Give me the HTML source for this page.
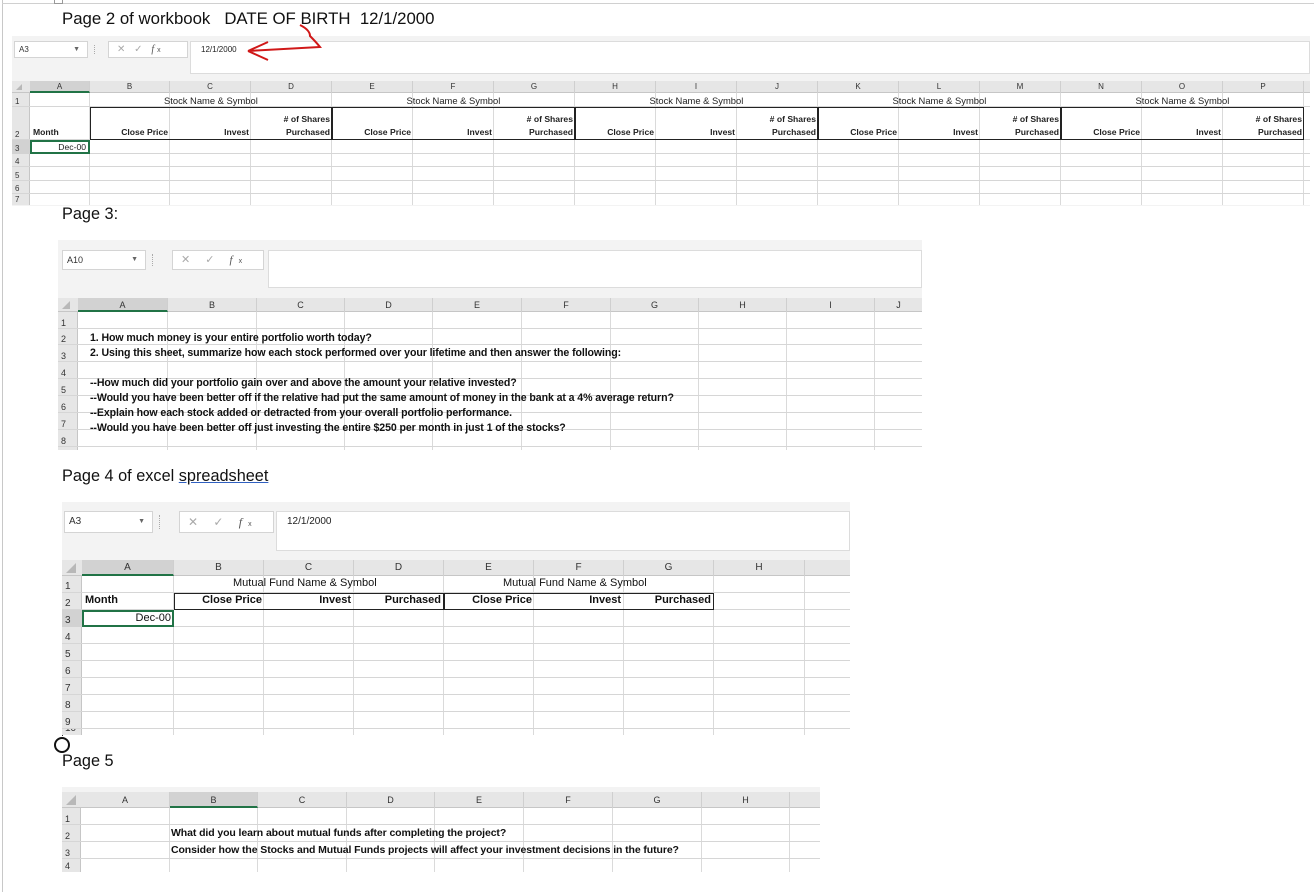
<!DOCTYPE html>
<html><head><meta charset="utf-8">
<style>
*{margin:0;padding:0;box-sizing:border-box}
body{width:1314px;height:892px;background:#fff;position:relative;overflow:hidden;font-family:"Liberation Sans",sans-serif}
.a{position:absolute}
.lbl{position:absolute;font-size:16.3px;color:#111;font-family:"Liberation Sans",sans-serif}
.c{position:absolute;white-space:nowrap;color:#111;overflow:visible}
</style></head><body>
<div class="a" style="left:2px;top:0;width:1px;height:892px;background:#c8c8c8"></div>
<div class="a" style="left:2px;top:3px;width:1312px;height:1px;background:#d0d0d0"></div>
<div class="a" style="left:54px;top:0;width:9px;height:4px;border:1px solid #999;border-top:none"></div>

<div class="lbl" style="left:62px;top:9px;font-size:16.8px">Page 2 of workbook &nbsp;&nbsp;DATE OF BIRTH &nbsp;12/1/2000</div>
<div class="lbl" style="left:62px;top:205px">Page 3:</div>
<div class="lbl" style="left:62px;top:467px">Page 4 of excel <span style="text-decoration:underline;text-decoration-color:#3060c0">spreadsheet</span></div>
<div class="lbl" style="left:62px;top:752px">Page 5</div>
<div class="a" style="left:54px;top:737px;width:16px;height:16px;border:2.5px solid #111;border-radius:50%"></div>
<div class="a" style="left:62px;top:718px;width:1px;height:18px;background:#333"></div>

<div id="root"></div>

<svg class="a" style="left:240px;top:20px;z-index:5" width="100" height="50" viewBox="0 0 100 50">
<path d="M60 5 Q70 10 70 16 Q76 22 80 27 L8 31 M8 31 L28 22 M8 31 L28 40" fill="none" stroke="#d01818" stroke-width="2"/>
</svg>

<script>
const R=document.getElementById('root');
function el(x,y,w,h,css,txt){const d=document.createElement('div');d.className='c';d.style.cssText=`left:${x}px;top:${y}px;width:${w}px;height:${h}px;`+(css||'');if(txt!=null)d.innerHTML=txt;R.appendChild(d);return d;}
function sheet(o){
 el(o.px,o.py,o.pw,o.ph,'background:#f3f3f3');
 if(o.fb){
  const f=o.fb;
  el(f.nx,f.ny,f.nw,f.nh,`background:#fff;border:1px solid #d4d4d4;font-size:${o.fs}px;line-height:${f.nh-2}px;padding-left:4px;color:#333`,f.name+`<span style="position:absolute;right:7px;font-size:7px;color:#666">&#9660;</span>`);
  el(f.nx+f.nw+6,f.ny+4,2,f.nh-8,'border-left:1px dotted #aaa');
  el(f.bx,f.ny,f.bw,f.nh,`background:#fff;border:1px solid #d4d4d4;color:#aaa;font-size:${o.fs+2}px;line-height:${f.nh-2}px;padding-left:8px;letter-spacing:${f.ls}px`,'&#10005; &#10003; <i style="font-family:Liberation Serif;color:#555">f</i><span style="font-size:7px;color:#555">x</span>');
  el(f.ix,f.ny,o.px+o.pw-f.ix,f.ih,`background:#fff;border:1px solid #dcdcdc;font-size:${o.fs}px;padding:${f.pt}px 0 0 10px;color:#222`,f.val||'');
 }
 const cols=o.cols, x0=o.x0, hy=o.hy, hh=o.hh;
 let xs=[x0];cols.forEach(w=>xs.push(xs[xs.length-1]+w));
 const right=o.px+o.pw;
 let ys=[hy+hh];o.rows.forEach(h=>ys.push(ys[ys.length-1]+h));
 const bottom=o.bottom||ys[ys.length-1];
 el(o.rhx,hy+hh,right-o.rhx,bottom-hy-hh,'background:#fff');
 el(o.rhx,hy,right-o.rhx,hh,'background:#e6e6e6;border-bottom:1px solid #c6c6c6');
 el(o.rhx,hy+hh,x0-o.rhx,bottom-hy-hh,'background:#e6e6e6;border-right:1px solid #c6c6c6');
 el(o.rhx+4,hy+3,0,0,`border-left:${hh-6}px solid transparent;border-bottom:${hh-6}px solid #b8b8b8`);
 const L="ABCDEFGHIJKLMNOP";
 for(let i=0;i<cols.length;i++){
  if(xs[i]>=right)break;
  const w=Math.min(cols[i],right-xs[i]);
  const sel=o.selCol===i;
  el(xs[i],hy,w,hh,`text-align:center;font-size:${o.fs}px;line-height:${hh}px;color:#333;overflow:hidden;`+(w===cols[i]?'border-right:1px solid #cfcfcf;':'')+(sel?'background:#d2d2d2;border-bottom:2px solid #217346;':''),L[i]);
 }
 for(let i=1;i<xs.length;i++) if(xs[i]<right) el(xs[i]-1,hy+hh,1,bottom-hy-hh,'background:#dadada');
 for(let j=1;j<ys.length;j++) if(ys[j]<=bottom) el(o.rhx,ys[j]-1,right-o.rhx,1,'background:#d6d6d6');
 for(let j=0;j<o.rows.length;j++){
  const h=Math.min(o.rows[j],bottom-ys[j]); if(h<=0)break;
  el(o.rhx,ys[j],x0-o.rhx,h,`font-size:${o.fs}px;padding-left:3px;display:flex;align-items:flex-end;padding-bottom:1px;overflow:hidden;color:#333;`+(o.selRow===j?'background:#d2d2d2;':''),String(j+1));
 }
 o.x=xs;o.y=ys;return o;
}
function t(x,y,txt,css){return el(x,y,0,0,css+';white-space:nowrap',txt);}

// ---------- Sheet 1 (page 2)
const s1=sheet({px:12,py:36,pw:1298,ph:170,fs:8,
 fb:{nx:14,ny:41,nw:74,nh:17,name:'A3',bx:108,bw:80,ls:3,ix:190,ih:33,pt:3,val:'12/1/2000'},
 rhx:12,x0:30,hy:81,hh:12,cols:[60,80,81,81,81,81,81,81,81,81,81,81,81,81,81,81],
 rows:[14,33,14,13,14,13,14],bottom:205,selCol:0,selRow:2});
(function(){const x=s1.x,y=s1.y,fs='font-size:8.6px;color:#222';
 for(let g=0;g<5;g++){const b=1+g*3;
  t((x[b]+x[b+3])/2-47,y[0]+2,'Stock Name &amp; Symbol','font-size:9.4px;color:#222');
  el(x[b],y[1],x[b+3]-x[b],y[2]-y[1],'border:1px solid #222;border-bottom:1.5px solid #222');
  el(x[b],y[1]+20,x[b+1]-x[b]-2,10,'text-align:right;font-weight:bold;'+fs,'Close Price');
  el(x[b+1],y[1]+20,x[b+2]-x[b+1]-2,10,'text-align:right;font-weight:bold;'+fs,'Invest');
  el(x[b+2],y[1]+7,x[b+3]-x[b+2]-2,10,'text-align:right;font-weight:bold;'+fs,'# of Shares');
  el(x[b+2],y[1]+20,x[b+3]-x[b+2]-2,10,'text-align:right;font-weight:bold;'+fs,'Purchased');
 }
 t(x[0]+3,y[1]+20,'Month','font-weight:bold;'+fs);
 el(x[0],y[2],x[1]-x[0],y[3]-y[2],'border:2px solid #217346;text-align:right;padding-right:2px;line-height:10px;'+fs,'Dec-00');
})();

// ---------- Sheet 2 (page 3)
const s2=sheet({px:58,py:240,pw:864,ph:210,fs:9,
 fb:{nx:62,ny:250,nw:84,nh:20,name:'A10',bx:172,bw:92,ls:6,ix:268,ih:38,pt:0},
 rhx:58,x0:78,hy:298,hh:14,cols:[90,89,88,88,89,89,88,88,88,90],
 rows:[17,16,17,17,17,17,17,17],bottom:450,selCol:0});
(function(){const fs='font-size:10.6px;font-weight:bold;color:#111;letter-spacing:-0.1px';
 t(90,332,'1. How much money is your entire portfolio worth today?',fs);
 t(90,347,'2. Using this sheet, summarize how each stock performed over your lifetime and then answer the following:',fs);
 t(90,377,'--How much did your portfolio gain over and above the amount your relative invested?',fs);
 t(90,392,'--Would you have been better off if the relative had put the same amount of money in the bank at a 4% average return?',fs);
 t(90,407,'--Explain how each stock added or detracted from your overall portfolio performance.',fs);
 t(90,422,'--Would you have been better off just investing the entire $250 per month in just 1 of the stocks?',fs);
})();

// ---------- Sheet 3 (page 4)
const s3=sheet({px:62,py:502,pw:788,ph:233,fs:10,
 fb:{nx:64,ny:511,nw:89,nh:22,name:'A3',bx:179,bw:95,ls:6,ix:276,ih:40,pt:4,val:'12/1/2000'},
 rhx:62,x0:82,hy:560,hh:16,cols:[92,90,90,90,90,90,90,91],
 rows:[17,17,17,17,17,17,17,17,17,17],bottom:735,selCol:0,selRow:2});
(function(){const x=s3.x,y=s3.y,fs='font-size:11px;color:#111';
 for(let g=0;g<2;g++){const b=1+g*3;
  t((x[b]+x[b+3])/2-76,y[0]+1,'Mutual Fund Name &amp; Symbol',fs);
  el(x[b],y[1],x[b+3]-x[b],y[2]-y[1],'border:1px solid #222;border-bottom:1.5px solid #222');
  el(x[b],y[1]+1,x[b+1]-x[b]-2,14,'text-align:right;font-weight:bold;'+fs,'Close Price');
  el(x[b+1],y[1]+1,x[b+2]-x[b+1]-3,14,'text-align:right;font-weight:bold;'+fs,'Invest');
  el(x[b+2],y[1]+1,x[b+3]-x[b+2]-3,14,'text-align:right;font-weight:bold;'+fs,'Purchased');
 }
 t(x[0]+3,y[1]+1,'Month','font-weight:bold;'+fs);
 el(x[0],y[2],x[1]-x[0],y[3]-y[2],'border:2px solid #217346;text-align:right;padding-right:1px;line-height:13px;'+fs,'Dec-00');
})();

// ---------- Sheet 4 (page 5)
const s4=sheet({px:62,py:787,pw:758,ph:85,fs:9,
 rhx:62,x0:81,hy:792,hh:16,cols:[89,88,89,88,89,89,89,88],
 rows:[17,17,17,17],bottom:872,selCol:1});
(function(){const fs='font-size:10.5px;font-weight:bold;color:#111;letter-spacing:-0.1px';
 t(171,827,'What did you learn about mutual funds after completing the project?',fs);
 t(171,844,'Consider how the Stocks and Mutual Funds projects will affect your investment decisions in the future?',fs);
})();
</script>
</body></html>
